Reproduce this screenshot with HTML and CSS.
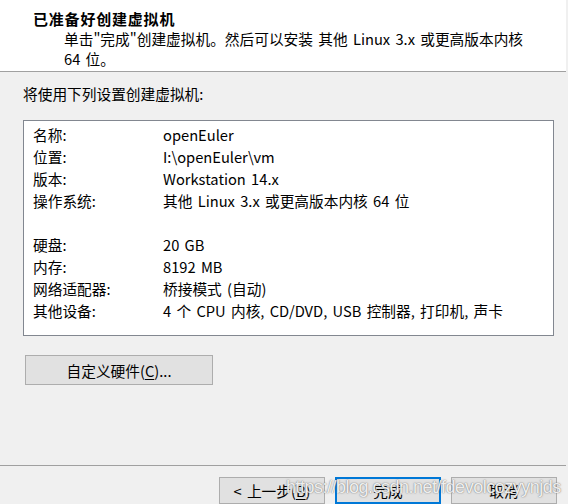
FILE: index.html
```html
<!DOCTYPE html>
<html lang="zh-CN">
<head>
<meta charset="utf-8">
<title>新建虚拟机向导</title>
<link rel="stylesheet" href="styles.css">
</head>
<body>
<div class="dialog">
  <header class="head">
    <div class="title">已准备好创建虚拟机</div>
    <div class="sub">
      <span class="line">单击"完成"创建虚拟机。然后可以安装 其他 Linux 3.x 或更高版本内核</span>
      <span class="line">64 位。</span>
    </div>
  </header>
  <main class="content">
    <div class="intro">将使用下列设置创建虚拟机:</div>
    <div class="summary">
      <div class="row"><span class="k">名称:</span><span class="v">openEuler</span></div>
      <div class="row"><span class="k">位置:</span><span class="v">I:\openEuler\vm</span></div>
      <div class="row"><span class="k">版本:</span><span class="v">Workstation 14.x</span></div>
      <div class="row"><span class="k">操作系统:</span><span class="v">其他 Linux 3.x 或更高版本内核 64 位</span></div>
      <div class="row"></div>
      <div class="row"><span class="k">硬盘:</span><span class="v">20 GB</span></div>
      <div class="row"><span class="k">内存:</span><span class="v">8192 MB</span></div>
      <div class="row"><span class="k">网络适配器:</span><span class="v">桥接模式 (自动)</span></div>
      <div class="row"><span class="k">其他设备:</span><span class="v">4 个 CPU 内核, CD/DVD, USB 控制器, 打印机, 声卡</span></div>
    </div>
    <button class="btn custom">自定义硬件(<u>C</u>)...</button>
  </main>
  <footer class="foot">
    <button class="btn nav">&lt; 上一步(<u>B</u>)</button>
    <button class="btn nav primary">完成</button>
    <button class="btn nav">取消</button>
  </footer>
  <div class="watermark">https://blog.csdn.net/fdevolcozyynjds</div>
</div>
</body>
</html>
```

FILE: styles.css
```css
html, body {
  margin: 0;
  padding: 0;
}
body {
  width: 568px;
  height: 504px;
  overflow: hidden;
  background: #f0f0f0;
  font-family: "Noto Sans CJK SC", "Noto Sans", sans-serif;
  font-size: 14.7px;
  word-spacing: 2px;
  color: #000;
}
.dialog {
  position: relative;
  width: 568px;
  height: 504px;
  display: flex;
  flex-direction: column;
}
.head {
  background: #fff;
  height: 62px;
  padding-top: 9px;
  border-bottom: 1px solid #a0a0a0;
  margin-right: 2px;
}
.title {
  padding-left: 33px;
  font-size: 15px;
  font-weight: 700;
  line-height: 20px;
  letter-spacing: 0.8px;
}
.sub {
  padding-left: 64px;
  line-height: 20px;
}
.line {
  display: block;
  white-space: nowrap;
}
.content {
  flex: 1;
  padding: 12px 0 0 23px;
  display: flex;
  flex-direction: column;
  align-items: flex-start;
}
.intro {
  line-height: 20px;
}
.summary {
  margin-top: 16px;
  width: 529px;
  height: 202px;
  padding: 3px 0 9px 0;
  background: #fff;
  border: 1px solid #828790;
}
.row {
  display: grid;
  grid-template-columns: 130px 1fr;
  height: 22px;
  line-height: 22px;
  padding-left: 9px;
  white-space: nowrap;
}
.btn {
  font-family: inherit;
  font-size: 14.7px;
  word-spacing: 2px;
  color: #000;
  background: #e1e1e1;
  border: 1px solid #adadad;
  padding: 0;
  margin: 0;
}
.btn u {
  text-underline-offset: 2px;
}
.custom {
  margin: 19px 0 0 2px;
  width: 188px;
  height: 30px;
}
.foot {
  flex: none;
  height: 39px;
  box-sizing: border-box;
  border-top: 1px solid #a0a0a0;
  margin-right: 2px;
  padding: 11px 9px 0 0;
  display: flex;
  justify-content: flex-end;
  gap: 10px;
}
.nav {
  width: 106px;
  height: 27px;
}
.primary {
  border: 2px solid #0078d7;
}
.watermark {
  position: absolute;
  left: 286px;
  top: 476px;
  font-family: "Liberation Sans", Arial, sans-serif;
  font-size: 18px;
  letter-spacing: -0.5px;
  line-height: 22px;
  word-spacing: 0;
  color: rgba(255, 255, 255, 0.9);
  text-shadow: 0 0 1px rgba(90, 90, 90, 0.8), 0 0 2px rgba(120, 120, 120, 0.5);
  white-space: nowrap;
  pointer-events: none;
}
```
